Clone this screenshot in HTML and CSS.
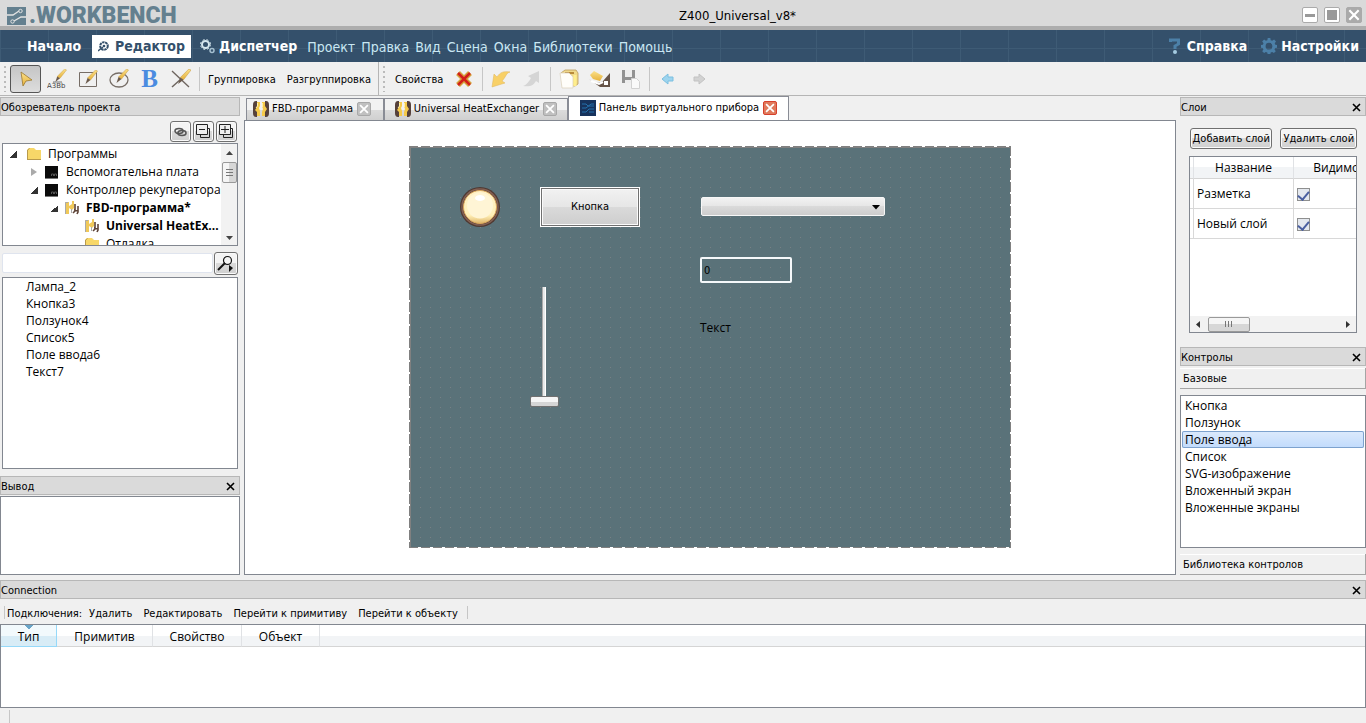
FILE: index.html
```
<!DOCTYPE html>
<html lang="ru">
<head>
    <meta charset="UTF-8">
    <meta name="viewport" content="width=device-width, initial-scale=1.0">
    <title>Z400_Universal_v8*</title>
    <link rel="stylesheet" href="styles.css">
</head>
<body>
    <!-- Общие значки -->
    <svg class="sprite" aria-hidden="true">
        <defs>
            <linearGradient id="gold" x1="0" y1="0" x2="0" y2="1">
                <stop offset="0" stop-color="#fbe08a"/>
                <stop offset="1" stop-color="#e6b23c"/>
            </linearGradient>
        </defs>
        <symbol id="pencil" viewBox="0 0 14 14">
            <path d="M12 0l2 1-7 9-3-2z" fill="url(#gold)" stroke="#c79a3c" stroke-width=".5"/>
            <path d="M4 8l3 2-5 4z" fill="#6b5a4c"/>
        </symbol>
        <symbol id="cross" viewBox="0 0 9 9">
            <path d="M1 1l7 7M8 1L1 8" stroke="currentColor" stroke-width="1.600" fill="none"/>
        </symbol>
        <symbol id="gear" viewBox="0 0 16 16">
            <path d="M6.700 0h2.600l.4 2.200 1.500.6L13.100 1.500l1.900 1.900-1.300 1.800.6 1.500 1.700.4v2.600l-1.900.4-.6 1.500 1.300 1.600-1.900 1.900-1.700-1.200-1.500.6-.4 2h-2.600l-.4-2-1.500-.6-1.700 1.200-1.900-1.900 1.200-1.700-.6-1.400-1.800-.4V7.100l1.900-.4.6-1.500L1.200 3.400l1.900-1.900 1.800 1.300 1.500-.6zM8 4.800a3.400 3.400 0 1 0 0 6.800 3.400 3.400 0 0 0 0-6.800z" fill="currentColor" fill-rule="evenodd"/>
        </symbol>
        <symbol id="folder" viewBox="0 0 14 12">
            <path d="M0 2l2-2h5l2 2h5v10H0z" fill="#f7d768"/>
            <path d="M.5 12V2l2-1.500M0 11.500h14" fill="none" stroke="#b89a4c"/>
        </symbol>
        <symbol id="device" viewBox="0 0 14 13">
            <path d="M0 0h13v12H0z" fill="#0b0b0b"/>
            <path d="M0 12.500h13" stroke="#777"/>
            <path d="M6.500 10V8h2v2M9.500 10V8h2v2" stroke="#555" fill="none"/>
        </symbol>
        <symbol id="program" viewBox="0 0 14 14">
            <path d="M0 1h4v4l3-2V0h2v7L7 9 4 7v6H1z" fill="#f0c95a"/>
            <path d="M.5 13V1.500H3M6.500 8v4" stroke="#aaa" fill="none"/>
            <path d="M10 3v7M13 5v6l-1 2M9 9l4 1M8 12l2-2" stroke="#5e4438" stroke-width="1.600" fill="none"/>
        </symbol>
        <symbol id="fbd" viewBox="0 0 16 16">
            <path d="M4 0H3Q0 0 0 4v8q0 4 3 4h1zM12 0h1q3 0 3 4v8q0 4-3 4h-1z" fill="#56413b"/>
            <path d="M4 1h3v4L6 7l1 3v5H4v-4L2 9l2-3zM9 1h3v4l2 3-2 3v4H9v-4l1-3-1-3z" fill="#f5ca4b"/>
            <path d="M4.500 2v3L3 7M9.500 2v4" stroke="#fff0ac" fill="none"/>
        </symbol>
    </svg>

    <!-- Заголовок окна -->
    <header class="titlebar">
        <div class="logo">
            <svg width="19" height="18" viewBox="0 0 19 18">
                <path d="M0 0h19v18H0z" fill="#64808f"/>
                <path d="M0 8h6l6-4M7 14l7-4h5" fill="none" stroke="#e4e4e4" stroke-width="1.300"/>
                <circle cx="13.500" cy="4" r="1.700" fill="#64808f" stroke="#e4e4e4"/>
                <circle cx="5.500" cy="14.500" r="1.700" fill="#64808f" stroke="#e4e4e4"/>
            </svg>
            <span>.WORKBENCH</span>
        </div>
        <h1>Z400_Universal_v8*</h1>
        <div class="window-buttons">
            <button aria-label="Свернуть"><svg width="10" height="10"><path d="M0 4h10v3H0z" fill="#999"/></svg></button>
            <button aria-label="Развернуть"><svg width="10" height="10"><path d="M0 0h10v10H0z" fill="#999"/></svg></button>
            <button aria-label="Закрыть" class="close"><svg width="12" height="12" viewBox="0 0 9 9"><use href="#cross"/></svg></button>
        </div>
    </header>

    <!-- Главное меню -->
    <nav class="menu">
        <a class="mode" href="#">Начало</a>
        <a class="mode selected" href="#">
            <svg width="11" height="11" viewBox="0 0 11 11"><circle cx="6" cy="5" r="3.800" fill="none" stroke="#34506b" stroke-width="2" stroke-dasharray="2.500 .6"/><circle cx="6" cy="5" r="1.300" fill="#34506b"/><path d="M0 10l5-4" stroke="#34506b" stroke-width="1.500"/></svg>
            Редактор
        </a>
        <a class="mode dispatcher" href="#">
            <svg width="15" height="15" viewBox="0 0 15 15"><circle cx="5.500" cy="5.500" r="3.500" fill="none" stroke="#d5e6ee" stroke-width="2"/><circle cx="5.500" cy="5.500" r="5" fill="none" stroke="#d5e6ee" stroke-dasharray="2 2"/><circle cx="12" cy="11.500" r="2" fill="none" stroke="#a5bfd0" stroke-width="1.500"/></svg>
            Диспетчер
        </a>
        <div class="menu-items">
            <a href="#">Проект</a>
            <a href="#">Правка</a>
            <a href="#">Вид</a>
            <a href="#">Сцена</a>
            <a href="#">Окна</a>
            <a href="#">Библиотеки</a>
            <a href="#">Помощь</a>
        </div>
        <div class="menu-right">
            <a class="mode" href="#">
                <svg width="12" height="16" viewBox="0 0 12 16"><path d="M1.500 4V2H9.500v4L6 8v3" fill="none" stroke="#4c80a8" stroke-width="3"/><circle cx="6" cy="14" r="2" fill="#a4cbe2"/></svg>
                Справка
            </a>
            <a class="mode" href="#">
                <svg class="settings-icon" width="16" height="16"><use href="#gear"/></svg>
                Настройки
            </a>
        </div>
    </nav>

    <!-- Панель инструментов -->
    <div class="toolbar">
        <div class="tool-group drawing">
            <i class="grip"></i>
            <button class="tool pressed" aria-label="Выбор"><svg width="20" height="20"><path d="M5 3l11 8-6 1-3 5z" fill="url(#gold)" stroke="#9b7930" stroke-width=".8"/></svg></button>
            <button class="tool" aria-label="Надпись"><svg width="20" height="20"><use href="#pencil" x="6" y="0" width="14" height="13"/><path d="M6 13h9" stroke="#777"/><text x="0" y="19" class="tiny">A3Bb</text></svg></button>
            <button class="tool" aria-label="Прямоугольник"><svg width="20" height="20"><path d="M1.500 3.500h17v14h-17z" fill="none" stroke="#766d66"/><use href="#pencil" x="5" y="1" width="15" height="14"/></svg></button>
            <button class="tool" aria-label="Эллипс"><svg width="20" height="20"><ellipse cx="10" cy="11" rx="9" ry="7" fill="none" stroke="#766d66" stroke-width="1.300"/><use href="#pencil" x="5" y="0" width="15" height="14"/></svg></button>
            <button class="tool bold-tool" aria-label="Текст">B</button>
            <button class="tool" aria-label="Линия"><svg width="20" height="20"><path d="M1 2l17 16" stroke="#6e655f" stroke-width="1.300"/><path d="M1 18l9-8" stroke="#6e655f" stroke-width="1.500"/><use href="#pencil" x="5" y="0" width="15" height="15"/></svg></button>
            <i class="separator"></i>
            <button class="text-tool">Группировка</button>
            <button class="text-tool">Разгруппировка</button>
        </div>
        <div class="tool-group">
            <i class="grip"></i>
            <button class="text-tool">Свойства</button>
            <button class="tool" aria-label="Удалить"><svg width="18" height="18"><path d="M3 3l12 12M15 3L3 15" stroke="#d6a33c" stroke-width="5.500"/><path d="M3 3l12 12M15 3L3 15" stroke="#d21f19" stroke-width="2.600"/></svg></button>
            <i class="separator"></i>
            <button class="tool" aria-label="Отменить"><svg width="20" height="18"><path d="M1 17L3 4l3 3c3-5 7-6 13-5-4 1-4 5-8 9l3 2z" fill="#f8d067" stroke="#dfb55a" stroke-width=".5"/></svg></button>
            <button class="tool" aria-label="Повторить"><svg width="20" height="18"><path d="M17 1v12l-3-2C11 16 7 17 1 16c4-1 6-5 8-8L6 6z" fill="#d5d5d5"/></svg></button>
            <i class="separator"></i>
            <button class="tool" aria-label="Копировать"><svg width="20" height="20"><path d="M2 4l4-3h11l2 3v11l-3 2H4z" fill="#f0d98a" stroke="#b99a5c" stroke-width=".8"/><path d="M6 3h9v2H6z" fill="#b88a3a"/><path d="M1 4h9l4 4v11H3z" fill="#fffef9" stroke="#ddd4c0" stroke-width=".8"/><path d="M16 6v11" stroke="#ffee8c" stroke-width="3"/></svg></button>
            <button class="tool" aria-label="Вырезать"><svg width="22" height="20"><path d="M1 6l4-4 9 5-3 5-7-2z" fill="url(#gold)"/><path d="M0 10c5 4 9 5 14 2l7-8v14H11z" fill="#665448"/><path d="M2 12l8 3 4-2" stroke="#fff" stroke-width="2" fill="none"/><path d="M15 12h4v4h-4z" fill="#fff"/></svg></button>
            <button class="tool" aria-label="Вставить"><svg width="20" height="20"><path d="M1 1h13v13H1z" fill="#929292"/><path d="M4 1h7v7H4zM4 11h6v3H4z" fill="#ededed"/><path d="M10.500 9.500h5l3 3v7h-8z" fill="#fafafa" stroke="#d2d2d2"/></svg></button>
            <i class="separator"></i>
            <button class="tool" aria-label="Назад"><svg width="14" height="14"><path d="M1 7l6-5v3h5v4H7v3z" fill="#9dd4ee" stroke="#7bbfe0"/></svg></button>
            <button class="tool" aria-label="Вперёд"><svg width="14" height="14"><path d="M13 7L7 2v3H2v4h5v3z" fill="#d2d2d2" stroke="#c2c2c2"/></svg></button>
        </div>
    </div>

    <main>
        <!-- Левая колонка -->
        <aside class="left">
            <h2 class="dock-title">Обозреватель проекта</h2>
            <div class="tree-buttons">
                <button class="small" aria-label="Связь"><svg width="13" height="12"><ellipse cx="5" cy="5" rx="4" ry="2.500" fill="none" stroke="#555" stroke-width="1.600"/><ellipse cx="8" cy="7" rx="4" ry="2.500" fill="none" stroke="#555" stroke-width="1.600"/></svg></button>
                <button class="small" aria-label="Свернуть всё"><svg width="15" height="15"><path d="M4.500 11v2.500h9v-9H11" fill="none" stroke="#222"/><path d="M.5.5h11v10H.5zM3 5.500h6" fill="#eee" stroke="#222"/></svg></button>
                <button class="small" aria-label="Развернуть всё"><svg width="15" height="15"><path d="M4.500 11v2.500h9v-9H11" fill="none" stroke="#222"/><path d="M.5.5h11v10H.5zM2 5.500h8M6 2v7" fill="#eee" stroke="#222"/></svg></button>
            </div>
            <div class="tree">
                <ul>
                    <li class="level-0"><i class="open"></i><svg width="14" height="12"><use href="#folder"/></svg>Программы</li>
                    <li class="level-1"><i class="shut"></i><svg width="14" height="13"><use href="#device"/></svg>Вспомогательна плата</li>
                    <li class="level-1"><i class="open"></i><svg width="14" height="13"><use href="#device"/></svg>Контроллер рекуператора</li>
                    <li class="level-2"><i class="open"></i><svg width="14" height="14"><use href="#program"/></svg><b>FBD-программа*</b></li>
                    <li class="level-3"><i></i><svg width="14" height="14"><use href="#program"/></svg><b>Universal HeatEx...</b></li>
                    <li class="level-3"><i></i><svg width="14" height="12"><use href="#folder"/></svg>Отладка</li>
                </ul>
                <div class="scroll-v">
                    <svg width="7" height="4"><path d="M0 4l3.500-4L7 4z" fill="#444"/></svg>
                    <span class="thumb"></span>
                    <svg class="down" width="7" height="4"><path d="M0 0h7L3.500 4z" fill="#444"/></svg>
                </div>
            </div>
            <div class="search">
                <input type="text" aria-label="Поиск">
                <button class="small" aria-label="Найти"><svg width="18" height="18"><circle cx="10.500" cy="5.500" r="4" fill="none" stroke="#111" stroke-width="1.200"/><path d="M8 8l-7 7" stroke="#111" stroke-width="2"/><path d="M12 10l4 3-4 4z" fill="#111"/></svg></button>
            </div>
            <ul class="list objects">
                <li>Лампа_2</li>
                <li>Кнопка3</li>
                <li>Ползунок4</li>
                <li>Список5</li>
                <li>Поле ввода6</li>
                <li>Текст7</li>
            </ul>
            <h2 class="dock-title">Вывод <button aria-label="Закрыть"><svg width="9" height="9"><use href="#cross"/></svg></button></h2>
            <div class="output"></div>
        </aside>

        <!-- Рабочая область -->
        <section class="workspace">
            <div class="tabs">
                <div class="tab first"><svg width="16" height="16"><use href="#fbd"/></svg>FBD-программа<button aria-label="Закрыть"><svg width="10" height="10" viewBox="0 0 9 9"><use href="#cross"/></svg></button></div>
                <div class="tab second"><svg width="16" height="16"><use href="#fbd"/></svg>Universal HeatExchanger<button aria-label="Закрыть"><svg width="10" height="10" viewBox="0 0 9 9"><use href="#cross"/></svg></button></div>
                <div class="tab active"><svg width="16" height="16"><path d="M0 0h16v16H0z" fill="#17335c"/><path d="M2 4h4l2 2h6M2 8h4l5-4h3M2 12h4l3-3h5M9 12h5" fill="none" stroke="#2471ab"/></svg>Панель виртуального прибора<button aria-label="Закрыть"><svg width="10" height="10" viewBox="0 0 9 9"><use href="#cross"/></svg></button></div>
            </div>
            <div class="scene">
                <div class="panel">
                    <svg class="lamp" width="40" height="40">
                        <defs>
                            <linearGradient id="glow" x1="0" y1="0" x2="0" y2="1">
                                <stop offset="0" stop-color="#fff0c4"/>
                                <stop offset=".75" stop-color="#fff0b8"/>
                                <stop offset="1" stop-color="#e0b669"/>
                            </linearGradient>
                        </defs>
                        <circle cx="20" cy="20" r="20" fill="#4f3a33"/>
                        <circle cx="20" cy="20" r="18" fill="none" stroke="#856052" stroke-width="1.500"/>
                        <circle cx="20" cy="20" r="16.500" fill="url(#glow)" stroke="#dca85d"/>
                        <circle cx="20" cy="18.500" r="13" fill="#fff5d5"/>
                        <ellipse cx="20" cy="11" rx="5" ry="3" fill="#fff"/>
                    </svg>
                    <button class="push">Кнопка</button>
                    <select class="combo" aria-label="Список"><option></option></select>
                    <svg class="combo-arrow" width="8" height="5"><path d="M0 0h8L4 4.500z"/></svg>
                    <input class="field" type="text" value="0" aria-label="Поле ввода">
                    <span class="label">Текст</span>
                    <input class="slider" type="range" min="0" max="100" value="0" aria-label="Ползунок">
                </div>
            </div>
        </section>

        <!-- Правая колонка -->
        <aside class="right">
            <h2 class="dock-title">Слои <button aria-label="Закрыть"><svg width="9" height="9"><use href="#cross"/></svg></button></h2>
            <div class="layers">
                <div class="layer-buttons">
                    <button class="small">Добавить слой</button>
                    <button class="small">Удалить слой</button>
                </div>
                <div class="layer-box">
                    <div class="layer-view">
                        <table>
                            <tr><th></th><th class="name">Название</th><th class="visible">Видимость</th></tr>
                            <tr><td></td><td>Разметка</td><td><input type="checkbox" aria-label="Видимость: Разметка" checked></td></tr>
                            <tr><td></td><td>Новый слой</td><td><input type="checkbox" aria-label="Видимость: Новый слой" checked></td></tr>
                        </table>
                    </div>
                    <div class="scroll-h">
                        <svg width="4" height="7"><path d="M4 0v7L0 3.500z" fill="#333"/></svg>
                        <span class="thumb"></span>
                        <svg class="forward" width="4" height="7"><path d="M0 0v7l4-3.500z" fill="#333"/></svg>
                    </div>
                </div>
            </div>
            <h2 class="dock-title">Контролы <button aria-label="Закрыть"><svg width="9" height="9"><use href="#cross"/></svg></button></h2>
            <button class="section">Базовые</button>
            <ul class="list controls">
                <li>Кнопка</li>
                <li>Ползунок</li>
                <li class="selected">Поле ввода</li>
                <li>Список</li>
                <li>SVG-изображение</li>
                <li>Вложенный экран</li>
                <li>Вложенные экраны</li>
            </ul>
            <button class="section">Библиотека контролов</button>
        </aside>
    </main>

    <!-- Подключения -->
    <section class="connection">
        <h2 class="dock-title">Connection <button aria-label="Закрыть"><svg width="9" height="9"><use href="#cross"/></svg></button></h2>
        <div class="connection-bar">
            <i class="separator"></i>
            <span>Подключения:</span>
            <button>Удалить</button>
            <button>Редактировать</button>
            <button>Перейти к примитиву</button>
            <button>Перейти к объекту</button>
            <i class="separator"></i>
        </div>
        <div class="connection-table">
            <table>
                <tr><th class="type sorted">Тип</th><th class="primitive">Примитив</th><th class="property">Свойство</th><th class="object">Объект</th><th class="rest"></th></tr>
            </table>
        </div>
    </section>
    <footer><i class="separator"></i></footer>
</body>
</html>
```
FILE: styles.css
```
* {
    box-sizing: border-box;
}
body {
    display: flex;
    flex-direction: column;
    height: 100vh;
    margin: 0;
    overflow: hidden;
    background: #f0f0f0;
    color: #000;
    font: 11px/16px "DejaVu Sans Condensed", "DejaVu Sans", sans-serif;
}
h1, h2, ul {
    margin: 0;
    padding: 0;
    font-weight: normal;
}
ul {
    list-style: none;
}
a {
    color: inherit;
    text-decoration: none;
}
button {
    padding: 0;
    border: 0;
    background: none;
    color: inherit;
    font: inherit;
    white-space: nowrap;
}
svg {
    flex: none;
    display: block;
}
table {
    border-collapse: separate;
    border-spacing: 0;
    table-layout: fixed;
}
.sprite {
    position: absolute;
    width: 0;
    height: 0;
}

/* заголовок */
.titlebar {
    display: grid;
    grid-template-columns: 1fr auto 1fr;
    align-items: center;
    flex: none;
    height: 30px;
    padding: 0 4px 0 7px;
    border-bottom: 4px solid #adadad;
    background: #dadada;
}
.titlebar h1 {
    margin-top: 4px;
    padding-left: 106px;
    font-size: 13px;
}
.logo {
    display: flex;
    align-items: center;
    gap: 3px;
    margin-top: 4px;
    color: #64808f;
    font: 900 23px/23px Roboto, sans-serif;
}
.window-buttons {
    display: flex;
    justify-content: flex-end;
    gap: 6px;
    margin: 2px 0 0 -106px;
}
.window-buttons button {
    display: grid;
    place-items: center;
    width: 16px;
    height: 16px;
    border: 1px solid #aaa;
    border-radius: 2px;
    background: #fff;
}
.window-buttons .close {
    background: #aaa;
    color: #fff;
}

/* меню */
.menu {
    display: flex;
    align-items: center;
    flex: none;
    height: 32px;
    padding: 0 7px 0 19px;
    background-color: #34506b;
    background-image: linear-gradient(90deg, #3e5b75 1px, transparent 1px), linear-gradient(#3e5b75 1px, transparent 1px);
    background-size: 48px 48px;
    background-position: 0 18px;
    color: #c9e7f3;
    font-size: 14px;
}
.menu .mode {
    display: flex;
    align-items: center;
    gap: 6px;
    height: 23px;
    padding: 0 6px;
    color: #fff;
    font-weight: bold;
}
.menu .mode:first-child {
    padding: 0 11px 0 8px;
}
.menu .selected {
    background: #fff;
    color: #34506b;
    margin-right: 3px;
}
.menu .dispatcher {
    gap: 4px;
}
.menu-items {
    display: flex;
    gap: 6px;
    padding: 2px 0 0 4px;
}
.menu-right {
    display: flex;
    margin-left: auto;
}
.menu-right .mode:first-child {
    padding-right: 8px;
}
.menu-right .mode:last-child {
    padding-right: 0;
    gap: 4px;
}
.settings-icon {
    color: #4c80a8;
}

/* инструменты */
.toolbar {
    display: flex;
    flex: none;
    height: 34px;
    border-bottom: 1px solid #b5b5b5;
}
.tool-group {
    display: flex;
    align-items: center;
    height: 33px;
    padding-left: 4px;
}
.drawing {
    width: 379px;
    border-right: 1px solid #b5b5b5;
}
.grip {
    width: 2px;
    height: 26px;
    margin-right: 4px;
    background: repeating-linear-gradient(#bbb 0 2px, transparent 2px 5px);
}
.tool {
    display: grid;
    place-items: center;
    width: 31px;
    height: 28px;
}
.pressed {
    border: 1px solid #555;
    border-radius: 3px;
    background: linear-gradient(#c5c5c5, #ddd);
}
.tiny {
    font: 7px "DejaVu Sans", sans-serif;
    fill: #444;
}
.bold-tool {
    color: #4b8be0;
    font: bold 25px/26px "Liberation Serif", serif;
}
.separator {
    width: 1px;
    height: 24px;
    background: #c6c6c6;
}
.toolbar .separator {
    margin: 0 2px 0 3px;
}
.text-tool {
    padding: 2px 5px 0 6px;
}

main {
    display: flex;
    flex: 1;
    gap: 4px;
    min-height: 0;
    padding-bottom: 5px;
}
.left, .right {
    display: flex;
    flex-direction: column;
    flex: none;
    width: 240px;
    padding-top: 1px;
}
.right {
    width: 186px;
}
.dock-title {
    display: flex;
    justify-content: space-between;
    align-items: center;
    flex: none;
    height: 19px;
    padding: 2px 4px 0 0;
    border: 1px solid #b7b7b7;
    background: #dadada;
    font-size: 11px;
}
.small {
    display: grid;
    place-items: center;
    height: 21px;
    border: 1px solid #707070;
    border-radius: 3px;
    background: linear-gradient(#f4f4f4 50%, #dadada 50%, #d0d0d0);
    box-shadow: inset 0 0 0 1px #fafafa;
}

/* дерево */
.tree-buttons {
    display: flex;
    justify-content: flex-end;
    gap: 2px;
    padding: 5px 3px 1px;
}
.tree-buttons .small {
    width: 21px;
}
.tree {
    display: flex;
    flex: none;
    height: 103px;
    margin: 0 2px;
    border: 1px solid #828790;
    background: #fff;
    overflow: hidden;
    font: 12px/18px "Open Sans", sans-serif;
}
.tree ul {
    flex: 1;
    min-width: 0;
    padding-top: 1px;
}
.tree li {
    display: flex;
    align-items: center;
    gap: 7px;
    height: 18px;
    white-space: nowrap;
}
.tree i {
    width: 7px;
    height: 7px;
}
.tree .open {
    background: linear-gradient(135deg, transparent 50%, #333 50%);
}
.tree .shut {
    border: 4px solid transparent;
    border-left: 6px solid #aaa;
    border-right: 0;
    height: 8px;
}
.level-0 {
    padding-left: 7px;
}
.level-0 i {
    margin-right: 3px;
}
.level-1 {
    padding-left: 28px;
}
.level-2 {
    padding-left: 48px;
}
.level-3 {
    padding-left: 68px;
}
.scroll-v {
    display: flex;
    flex-direction: column;
    align-items: center;
    width: 16px;
    padding: 7px 0 5px;
    background: #f2f2f2;
}
.scroll-v .thumb {
    width: 15px;
    height: 21px;
    margin-top: 7px;
    border: 1px solid #999;
    border-radius: 2px;
    background: repeating-linear-gradient(#777 0 1px, transparent 1px 3px) center / 7px 8px no-repeat, linear-gradient(90deg, #f5f5f5 50%, #d7d7d7 50%);
}
.scroll-v .down {
    margin-top: auto;
}
.search {
    display: flex;
    gap: 1px;
    padding: 6px 2px 2px;
}
.search input {
    flex: 1;
    min-width: 0;
    height: 20px;
    margin-top: 1px;
    border: 1px solid #dfe4ee;
    border-radius: 2px;
    background: #fff;
}
.search .small {
    width: 24px;
    height: 23px;
}
.list {
    border: 1px solid #828790;
    background: #fff;
    font: 12px/17px "Open Sans", sans-serif;
}
.objects {
    flex: 1;
    margin: 0 2px 7px;
    padding: 0 23px;
}
.output {
    flex: none;
    height: 79px;
    margin-top: 1px;
    border: 1px solid #828790;
    background: #fff;
}

/* сцена */
.workspace {
    display: flex;
    flex-direction: column;
    flex: 1;
    min-width: 0;
}
.tabs {
    display: flex;
    align-items: flex-end;
    height: 24px;
    padding-left: 2px;
}
.tab {
    display: flex;
    align-items: center;
    justify-content: center;
    gap: 3px;
    height: 22px;
    padding-bottom: 2px;
    border: 1px solid #898c95;
    border-bottom: 0;
    background: linear-gradient(#f2f2f2 50%, #dcdcdc 50%, #d0d0d0);
}
.first {
    width: 138px;
    padding-right: 6px;
}
.second {
    width: 184px;
}
.tab.active {
    width: 221px;
    height: 25px;
    margin-bottom: -1px;
    background: #fff;
}
.tab button {
    display: grid;
    place-items: center;
    width: 14px;
    height: 14px;
    margin-left: 1px;
    border: 1px solid #a8a8a8;
    border-radius: 2px;
    background: #c0c0c0;
    color: #fff;
}
.tab.active button {
    border-color: #d6402c;
    background: #e07a5c;
}
.scene {
    display: grid;
    place-items: center;
    flex: 1;
    padding-bottom: 2px;
    border: 1px solid #828790;
    background: #fff;
}
.panel {
    position: relative;
    width: 602px;
    height: 402px;
    background:
        repeating-linear-gradient(90deg, #808080 0 9px, #fff 9px 12px) 0 0 / 100% 1px no-repeat,
        repeating-linear-gradient(90deg, #808080 0 9px, #fff 9px 12px) 0 100% / 100% 1px no-repeat,
        repeating-linear-gradient(#808080 0 10px, #fff 10px 12px) 0 0 / 1px 100% no-repeat,
        repeating-linear-gradient(#808080 0 10px, #fff 10px 12px) 100% 0 / 1px 100% no-repeat,
        linear-gradient(#808080, #808080) 0 1px / 100% 1px no-repeat,
        linear-gradient(#808080, #808080) 1px 0 / 1px 100% no-repeat,
        conic-gradient(at 1px 1px, transparent 75%, #7b8083 75%) 1px 1px / 10px 10px,
        #5a7279;
}
.panel > * {
    position: absolute;
}
.lamp {
    left: 51px;
    top: 41px;
}
.push {
    left: 131px;
    top: 41px;
    width: 100px;
    height: 40px;
    border: 1px solid #fff;
    background: linear-gradient(#f2f2f2, #e6e6e6 50%, #dadada 50%, #cdcdcd);
    box-shadow: inset 0 0 0 1px #707070, inset 0 0 0 2px #fafafa;
}
.combo {
    left: 292px;
    top: 51px;
    width: 184px;
    height: 19px;
    appearance: none;
    border: 1px solid #f7f7f7;
    border-radius: 2px;
    background: linear-gradient(#f2f2f2, #e6e6e6 50%, #dadada 50%, #cdcdcd);
}
.combo-arrow {
    left: 463px;
    top: 59px;
}
.field {
    left: 291px;
    top: 111px;
    width: 92px;
    height: 26px;
    padding: 2px 2px 0;
    border: 2px solid #f5f8fa;
    border-radius: 2px;
    background: transparent;
    color: #000;
    font: inherit;
}
.label {
    left: 291px;
    top: 173px;
    font: 12px/17px "Open Sans", sans-serif;
}
.slider {
    left: 120px;
    top: 141px;
    width: 30px;
    height: 120px;
    margin: 0;
    appearance: none;
    writing-mode: vertical-lr;
    direction: rtl;
    background: linear-gradient(90deg, #aaa 1px, #e7eaea 1px 3px, #fff 3px) 13px 0 / 4px 100% no-repeat;
}
.slider::-webkit-slider-thumb {
    appearance: none;
    width: 29px;
    height: 11px;
    border: 1px solid #707070;
    border-radius: 2px;
    background: linear-gradient(#f5f5f5 50%, #d5d5d5 50%);
}

/* слои */
.layers {
    padding: 12px 9px 14px;
}
.layer-buttons {
    display: flex;
    justify-content: space-between;
    gap: 8px;
    padding-left: 1px;
}
.layer-buttons .small {
    flex: 82 1 0;
    padding-top: 1px;
}
.layer-buttons .small:last-child {
    flex-grow: 76;
}
.layer-box {
    margin-top: 7px;
    border: 1px solid #828790;
    background: #fff;
}
.layer-view {
    height: 159px;
    overflow: hidden;
}
.layer-view table {
    width: 224px;
    font: 12px/16px "Open Sans", sans-serif;
}
.layer-view th {
    width: 4px;
    height: 22px;
    padding: 1px 0 0;
    border-right: 1px solid #e0e2e5;
    border-bottom: 1px solid #d5d5d5;
    background: linear-gradient(#fff 50%, #f2f4f6 50%);
    font-weight: normal;
}
.layer-view .name {
    width: 100px;
}
.layer-view .visible {
    width: 120px;
    padding-right: 16px;
}
.layer-view td {
    height: 30px;
    padding: 1px 3px 0;
    border-right: 1px solid #d8d8d8;
    border-bottom: 1px solid #d8d8d8;
}
.layer-view td:first-child {
    padding: 0;
}
.layer-view input {
    display: grid;
    place-items: center;
    width: 13px;
    height: 13px;
    margin: 0;
    appearance: none;
    border: 1px solid #8e8f8f;
    background: #e4e8ee;
}
.layer-view input:checked::before {
    content: "";
    width: 5px;
    height: 9px;
    margin-bottom: 2px;
    border: solid #4a5fa0;
    border-width: 0 2px 2px 0;
    transform: rotate(40deg);
}
.scroll-h {
    display: flex;
    align-items: center;
    height: 16px;
    padding: 0 6px;
    background: #f2f2f2;
}
.scroll-h .thumb {
    width: 42px;
    height: 15px;
    margin-left: 8px;
    border: 1px solid #999;
    border-radius: 2px;
    background: repeating-linear-gradient(90deg, #777 0 1px, transparent 1px 3px) center / 8px 6px no-repeat, linear-gradient(#f5f5f5 50%, #d7d7d7 50%);
}
.scroll-h .forward {
    margin-left: auto;
}
.section {
    flex: none;
    height: 21px;
    padding: 2px 3px 0;
    border: solid #a5a5a5;
    border-width: 0 1px 1px 0;
    box-shadow: inset 0 1px #fff;
    text-align: left;
}
.right .section {
    margin-top: 2px;
}
.controls {
    flex: 1;
    margin: 6px 0 4px;
    padding: 1px;
}
.controls li {
    padding: 0 3px;
}
.controls .selected {
    border-radius: 2px;
    background: linear-gradient(#dceafc, #c1dbfc);
    box-shadow: inset 0 0 0 1px #7da2ce;
}

/* подключения */
.connection {
    flex: none;
}
.connection-bar {
    display: flex;
    align-items: center;
    height: 25px;
    padding: 2px 4px 0;
}
.connection-bar .separator, footer .separator {
    height: 13px;
}
.connection-bar span {
    padding: 2px 1px 0 2px;
}
.connection-bar button {
    padding: 2px 5px 0 6px;
}
.connection-bar .separator:last-child {
    margin-left: 4px;
}
.connection-table {
    height: 84px;
    border: 1px solid #828790;
    background: #fff;
}
.connection-table table {
    width: 100%;
    font: 12px/16px "Open Sans", sans-serif;
}
.connection-table th {
    height: 22px;
    padding: 2px 0 0;
    border-right: 1px solid #e0e2e5;
    border-bottom: 1px solid #d5d5d5;
    background: linear-gradient(#fff 50%, #f2f4f6 50%);
    font-weight: normal;
}
.connection-table .type {
    width: 56px;
}
.connection-table .primitive {
    width: 96px;
}
.connection-table .property {
    width: 89px;
}
.connection-table .object {
    width: 78px;
}
.connection-table .rest {
    border-right: 0;
}
.connection-table .sorted {
    border-color: #96d9f9;
    background: conic-gradient(from -45deg at 50% 4px, #6aa5c8 90deg, transparent 90deg) center 0 / 8px 4px no-repeat, linear-gradient(#f2f9fc 50%, #d8ecf6 50%);
}
footer {
    flex: none;
    height: 15px;
    padding: 2px 9px;
}
footer .separator {
    display: block;
}
```
